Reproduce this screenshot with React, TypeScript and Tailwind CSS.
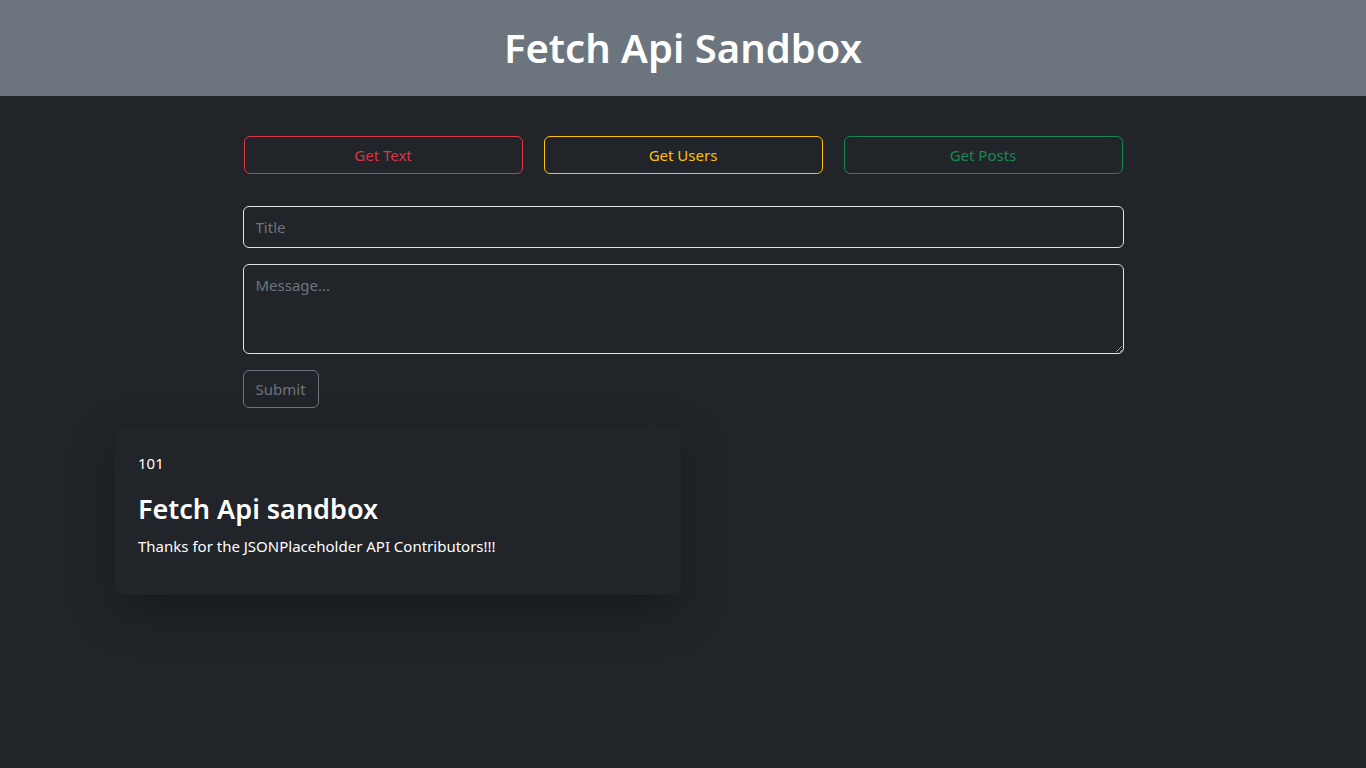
export default function App() {
  const font = { fontFamily: '"Segoe UI", "Noto Sans", "Open Sans", sans-serif' };
  return (
    <div className="min-h-screen bg-[#212529] text-white" style={font}>
      <header className="h-[96px] bg-[#6c757d] flex items-center justify-center">
        <h1 className="text-[40px] font-semibold leading-none">Fetch Api Sandbox</h1>
      </header>
      <div className="w-[881px] mx-auto pt-10">
        <div className="flex gap-[21px] px-px">
          <button className="flex-1 h-[38px] rounded-md border border-[#dc3545] text-[#dc3545] text-[15px]">Get Text</button>
          <button className="flex-1 h-[38px] rounded-md border border-[#ffc107] text-[#ffc107] text-[15px]">Get Users</button>
          <button className="flex-1 h-[38px] rounded-md border border-[#198754] text-[#198754] text-[15px]">Get Posts</button>
        </div>
        <div className="mt-8 flex flex-col gap-4">
          <input placeholder="Title" className="h-[42px] rounded-md border border-[#dee2e6] bg-transparent px-3 text-[15px] placeholder:text-[#6c757d] outline-none" />
          <textarea placeholder="Message..." className="h-[90px] rounded-md border border-[#dee2e6] bg-transparent px-3 py-[9px] text-[15px] placeholder:text-[#6c757d] outline-none resize-y" />
          <div>
            <button className="h-[38px] px-3 rounded-md border border-[#6c757d] text-[#6c757d] text-[15px]">Submit</button>
          </div>
        </div>
      </div>
      <div className="w-[1136px] mx-auto mt-[18px]">
        <div className="w-[566px] h-[169px] rounded-md bg-[#212429] shadow-[0_1rem_3rem_rgba(0,0,0,0.3)] px-[23px] pt-[25px]">
          <p className="text-[15px] leading-6">101</p>
          <h2 className="mt-[17px] text-[27px] font-semibold leading-tight">Fetch Api sandbox</h2>
          <p className="mt-2 text-[15px] leading-6">Thanks for the JSONPlaceholder API Contributors!!!</p>
        </div>
      </div>
    </div>
  );
}
